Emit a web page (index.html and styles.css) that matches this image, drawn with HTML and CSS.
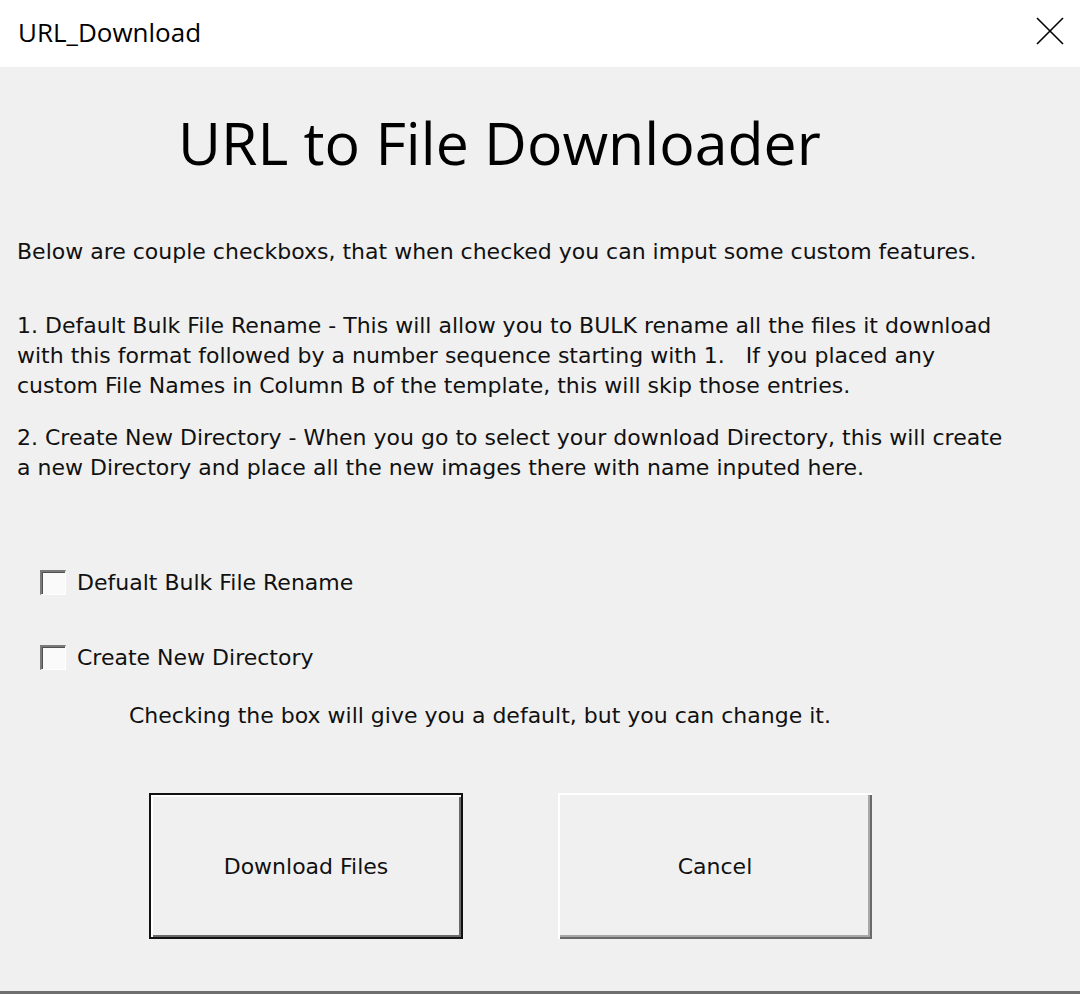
FILE: index.html
```html
<!DOCTYPE html>
<html>
<head>
    <title>URL_Download</title>
    <meta name="viewport" content="width=device-width, initial-scale=1.0">
    <link rel="stylesheet" href="styles.css">
</head>
<body>
    <div class="window">
        <div class="titlebar">
            <span class="title">URL_Download</span>
            <span class="close">
                <svg width="28" height="28" viewBox="0 0 28 28">
                    <path d="M1 1 L27 27 M27 1 L1 27" stroke="#000" stroke-width="1.6" fill="none"/>
                </svg>
            </span>
        </div>

        <div class="dialog">
            <h1>URL to File Downloader</h1>

            <p class="intro">Below are couple checkboxs, that when checked you can imput some custom features.</p>

            <p class="info">1. Default Bulk File Rename - This will allow you to BULK rename all the files it download<br>with this format followed by a number sequence starting with 1.&nbsp;&nbsp; If you placed any<br>custom File Names in Column B of the template, this will skip those entries.</p>

            <p class="info second">2. Create New Directory - When you go to select your download Directory, this will create<br>a new Directory and place all the new images there with name inputed here.</p>

            <div class="options">
                <label class="option"><span class="checkbox"></span>Defualt Bulk File Rename</label>
                <label class="option"><span class="checkbox"></span>Create New Directory</label>
            </div>

            <p class="hint">Checking the box will give you a default, but you can change it.</p>

            <div class="buttons">
                <button class="btn default">Download Files</button>
                <button class="btn">Cancel</button>
            </div>
        </div>
    </div>
</body>
</html>
```

FILE: styles.css
```css
body {
    margin: 0;
    background-color: #f0f0f0;
    font-family: "DejaVu Sans", sans-serif;
    color: #111;
}

.window {
    height: 994px;
    box-sizing: border-box;
    border-bottom: 3px solid #6f6f6f;
}

.titlebar {
    height: 67px;
    background: #fff;
    display: flex;
    align-items: center;
    justify-content: space-between;
    padding: 0 16px 0 18px;
}

.title {
    font-family: "Open Sans", sans-serif;
    font-size: 26px;
    color: #000;
    margin-top: -4px;
}

.close {
    display: flex;
    margin-top: -6px;
}

.dialog {
    padding-left: 17px;
}

h1 {
    font-family: "Open Sans", sans-serif;
    font-weight: normal;
    font-size: 59px;
    line-height: 70px;
    margin: 40px 0 0 161px;
    color: #000;
}

p {
    margin: 0;
    font-size: 22px;
    line-height: 30px;
    white-space: nowrap;
}

.intro {
    margin-top: 60px;
}

.info {
    margin-top: 44px;
}

.info.second {
    margin-top: 22px;
}

.options {
    margin-top: 84px;
    padding-left: 23px;
    display: flex;
    flex-direction: column;
    gap: 45px;
}

.option {
    display: flex;
    align-items: center;
    height: 30px;
    gap: 11px;
    font-size: 22px;
}

.checkbox {
    width: 23px;
    height: 22px;
    background: #fafafa;
    border-top: 2px solid #7a7a7a;
    border-left: 2px solid #7a7a7a;
    border-right: 1px solid #fff;
    border-bottom: 1px solid #fff;
    box-shadow: inset 1px 1px #505050;
}

.hint {
    margin-top: 29px;
    padding-left: 112px;
}

.buttons {
    display: flex;
    gap: 95px;
    margin-top: 62px;
    padding-left: 132px;
}

.btn {
    width: 314px;
    height: 146px;
    background: #f0f0f0;
    font-family: "DejaVu Sans", sans-serif;
    font-size: 22px;
    color: #111;
    border: none;
    box-shadow: inset 2px 2px #fff, inset -2px -2px #6a6a6a, inset -4px -4px #a8a8a8;
}

.btn.default {
    border: 2px solid #111;
    box-shadow: inset 2px 2px #fff, inset -2px -2px #6a6a6a;
}
```
